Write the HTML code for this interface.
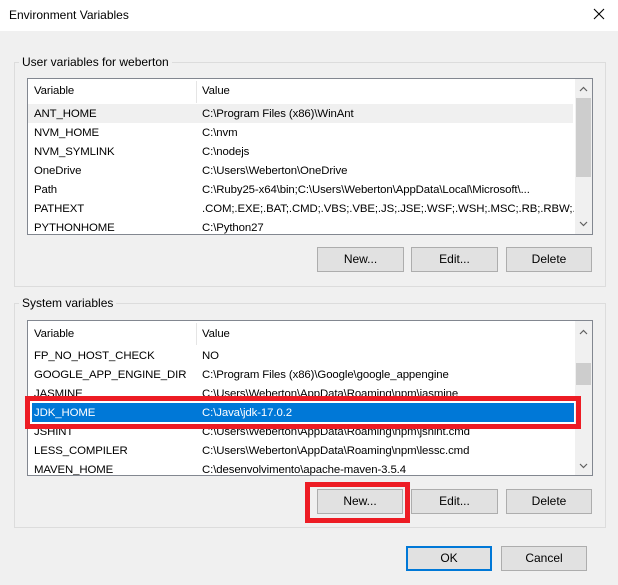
<!DOCTYPE html>
<html><head><style>
*{margin:0;padding:0;box-sizing:border-box}
body{width:618px;height:585px;background:#f0f0f0;font-family:"Liberation Sans",sans-serif;font-size:12px;color:#000;position:relative;overflow:hidden}
.a{position:absolute}
.t{position:absolute;white-space:nowrap;line-height:19px;overflow:hidden}
.list .t{font-size:11.4px;letter-spacing:-0.1px}
.v{width:160px}
.w{width:372px}
.grp{position:absolute;border:1px solid #dcdcdc}
.lbl{position:absolute;background:#f0f0f0;padding:0 3px;line-height:14px}
.list{position:absolute;background:#fff;border:1px solid #828790;overflow:hidden}
.btn{position:absolute;background:#e1e1e1;border:1px solid #adadad;text-align:center;line-height:22px}
.sb{position:absolute;background:#f0f0f0}
.row{position:absolute;left:0;height:19px;width:545px}
</style></head><body>
<div class="a" style="left:0;top:0;width:618px;height:31px;background:#fff"></div>
<div class="t" style="left:9px;top:6px">Environment Variables</div>
<svg class="a" style="left:593px;top:8px" width="12" height="12"><path d="M1 1L11 11M11 1L1 11" stroke="#000" stroke-width="1.1"/></svg>

<div class="grp" style="left:14px;top:62px;width:592px;height:225px"></div>
<div class="lbl" style="left:19px;top:55px">User variables for weberton</div>
<div class="list" style="left:27px;top:78px;width:566px;height:157px">
 <div class="a" style="left:168px;top:2px;width:1px;height:22px;background:#e5e5e5"></div>
 <div class="t" style="left:6px;top:3px">Variable</div><div class="t" style="left:174px;top:3px">Value</div>
 <div class="row" style="top:25px;background:#f0f0f0"></div>
 <div class="t v" style="left:6px;top:26px">ANT_HOME</div><div class="t w" style="left:174px;top:26px">C:\Program Files (x86)\WinAnt</div>
 <div class="t v" style="left:6px;top:45px">NVM_HOME</div><div class="t w" style="left:174px;top:45px">C:\nvm</div>
 <div class="t v" style="left:6px;top:64px">NVM_SYMLINK</div><div class="t w" style="left:174px;top:64px">C:\nodejs</div>
 <div class="t v" style="left:6px;top:83px">OneDrive</div><div class="t w" style="left:174px;top:83px">C:\Users\Weberton\OneDrive</div>
 <div class="t v" style="left:6px;top:102px">Path</div><div class="t w" style="left:174px;top:102px">C:\Ruby25-x64\bin;C:\Users\Weberton\AppData\Local\Microsoft\...</div>
 <div class="t v" style="left:6px;top:121px">PATHEXT</div><div class="t w" style="left:174px;top:121px">.COM;.EXE;.BAT;.CMD;.VBS;.VBE;.JS;.JSE;.WSF;.WSH;.MSC;.RB;.RBW;....</div>
 <div class="t v" style="left:6px;top:140px">PYTHONHOME</div><div class="t w" style="left:174px;top:140px">C:\Python27</div>
 <div class="sb" style="left:547px;top:0;width:17px;height:155px"></div>
 <div class="a" style="left:548px;top:19px;width:15px;height:79px;background:#cdcdcd"></div>
 <svg class="a" style="left:551px;top:7px" width="9" height="6"><path d="M1 5L4.5 1.5L8 5" stroke="#606060" fill="none" stroke-width="1.2"/></svg>
 <svg class="a" style="left:551px;top:142px" width="9" height="6"><path d="M1 1L4.5 4.5L8 1" stroke="#606060" fill="none" stroke-width="1.2"/></svg>
</div>
<div class="btn" style="left:317px;top:247px;width:87px;height:25px">New...</div>
<div class="btn" style="left:411px;top:247px;width:87px;height:25px">Edit...</div>
<div class="btn" style="left:506px;top:247px;width:86px;height:25px">Delete</div>

<div class="grp" style="left:14px;top:303px;width:592px;height:225px"></div>
<div class="lbl" style="left:19px;top:296px">System variables</div>
<div class="list" style="left:27px;top:320px;width:566px;height:156px">
 <div class="a" style="left:168px;top:2px;width:1px;height:22px;background:#e5e5e5"></div>
 <div class="t" style="left:6px;top:4px">Variable</div><div class="t" style="left:174px;top:4px">Value</div>
 <div class="t v" style="left:6px;top:26px">FP_NO_HOST_CHECK</div><div class="t w" style="left:174px;top:26px">NO</div>
 <div class="t v" style="left:6px;top:45px">GOOGLE_APP_ENGINE_DIR</div><div class="t w" style="left:174px;top:45px">C:\Program Files (x86)\Google\google_appengine</div>
 <div class="t v" style="left:6px;top:64px">JASMINE</div><div class="t w" style="left:174px;top:64px">C:\Users\Weberton\AppData\Roaming\npm\jasmine</div>
 <div class="row" style="top:82px;background:#0078d7;left:4px;width:542px"></div>
 <div class="t v" style="left:6px;top:83px;color:#fff">JDK_HOME</div><div class="t w" style="left:174px;top:83px;color:#fff">C:\Java\jdk-17.0.2</div>
 <div class="t v" style="left:6px;top:102px">JSHINT</div><div class="t w" style="left:174px;top:102px">C:\Users\Weberton\AppData\Roaming\npm\jshint.cmd</div>
 <div class="t v" style="left:6px;top:121px">LESS_COMPILER</div><div class="t w" style="left:174px;top:121px">C:\Users\Weberton\AppData\Roaming\npm\lessc.cmd</div>
 <div class="t v" style="left:6px;top:140px">MAVEN_HOME</div><div class="t w" style="left:174px;top:140px">C:\desenvolvimento\apache-maven-3.5.4</div>
 <div class="sb" style="left:547px;top:0;width:17px;height:154px"></div>
 <div class="a" style="left:548px;top:42px;width:15px;height:22px;background:#cdcdcd"></div>
 <svg class="a" style="left:551px;top:8px" width="9" height="6"><path d="M1 5L4.5 1.5L8 5" stroke="#606060" fill="none" stroke-width="1.2"/></svg>
 <svg class="a" style="left:551px;top:142px" width="9" height="6"><path d="M1 1L4.5 4.5L8 1" stroke="#606060" fill="none" stroke-width="1.2"/></svg>
</div>
<div class="a" style="left:25px;top:396px;width:556px;height:33px;border:5px solid #ed1c24"></div>
<div class="btn" style="left:317px;top:489px;width:86px;height:25px">New...</div>
<div class="btn" style="left:411px;top:489px;width:87px;height:25px">Edit...</div>
<div class="btn" style="left:506px;top:489px;width:86px;height:25px">Delete</div>
<div class="a" style="left:305px;top:482px;width:105px;height:41px;border:5px solid #ed1c24"></div>

<div class="btn" style="left:406px;top:546px;width:86px;height:25px;border:2px solid #0078d7;line-height:21px">OK</div>
<div class="btn" style="left:501px;top:546px;width:86px;height:25px">Cancel</div>
</body></html>
